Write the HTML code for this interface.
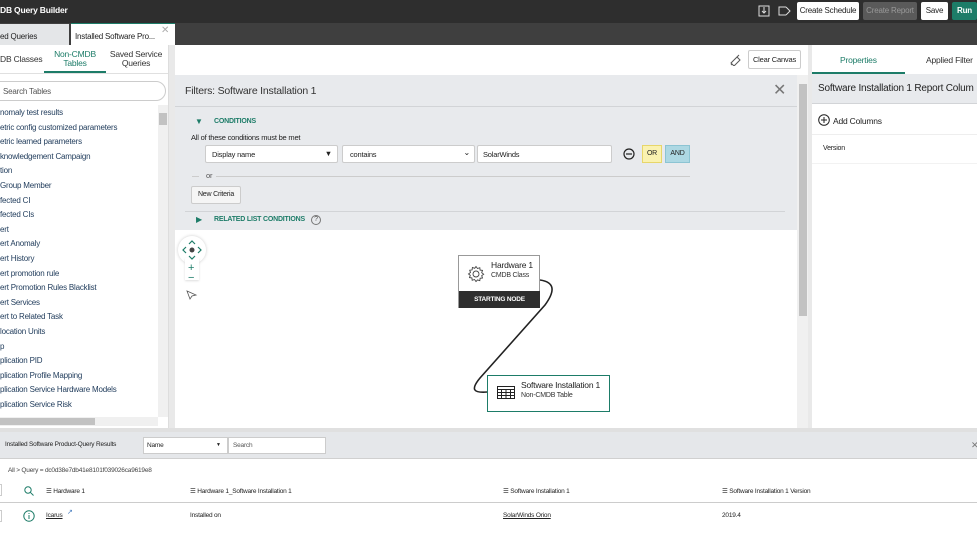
<!DOCTYPE html>
<html><head><meta charset="utf-8">
<style>
*{box-sizing:border-box;margin:0;padding:0}
body{width:977px;height:547px;overflow:hidden;font-family:"Liberation Sans",sans-serif;font-size:8px;color:#222;background:#fff;position:relative;letter-spacing:-0.2px}
.a{position:absolute}
.btn{position:absolute;top:2px;height:18px;font-size:8px;line-height:18px;text-align:center;border-radius:2px}
.li{position:absolute;left:0;font-size:8px;color:#1e3a5a;white-space:nowrap}
</style></head><body>
<div class="a" style="left:0;top:0;width:977px;height:23px;background:#2e2e2e"></div>
<div class="a" style="left:0;top:5px;color:#fff;font-weight:bold;font-size:8.5px">DB Query Builder</div>
<svg class="a" style="left:758px;top:5px" width="12" height="12" viewBox="0 0 12 12" fill="none" stroke="#ddd" stroke-width="1"><rect x="1" y="1" width="10" height="10"/><path d="M6 2v6M4 6l2 2 2-2"/></svg>
<svg class="a" style="left:778px;top:5px" width="13" height="12" viewBox="0 0 13 12" fill="none" stroke="#ddd" stroke-width="1"><path d="M8 2H1v8h7M8 2l4 4-4 4"/></svg>
<div class="btn" style="left:797px;width:62px;background:#fff;color:#222">Create Schedule</div>
<div class="btn" style="left:863px;width:54px;background:#5a5a5a;color:#999">Create Report</div>
<div class="btn" style="left:921px;width:27px;background:#fff;color:#222">Save</div>
<div class="btn" style="left:952px;width:25px;background:#1d7c68;color:#fff;font-weight:bold">Run</div>
<div class="a" style="left:0;top:23px;width:977px;height:22px;background:#3f3f3f"></div>
<div class="a" style="left:0;top:24px;width:69px;height:21px;background:#e4e6e8;padding:8px 0 0 0;font-size:8px">ed Queries</div>
<div class="a" style="left:71px;top:23px;width:104px;height:22px;background:#fff;border-top:1px solid #1d7c68;padding:8px 0 0 4px;font-size:8px">Installed Software Pro...</div>
<div class="a" style="left:161px;top:25px;color:#aaa;font-size:10px">✕</div>
<div class="a" style="left:0;top:45px;width:170px;height:385px;background:#fff"></div>
<div class="a" style="left:0;top:54px;font-size:8.5px;color:#333">DB Classes</div>
<div class="a" style="left:44px;top:50px;width:62px;text-align:center;font-size:8.5px;color:#1d7c68;line-height:9px">Non-CMDB<br>Tables</div>
<div class="a" style="left:44px;top:71px;width:62px;height:2px;background:#1d7c68"></div>
<div class="a" style="left:104px;top:50px;width:64px;text-align:center;font-size:8.5px;color:#333;line-height:9px">Saved Service<br>Queries</div>
<div class="a" style="left:0;top:73px;width:170px;height:1px;background:#e0e0e0"></div>
<div class="a" style="left:-10px;top:81px;width:176px;height:20px;border:1px solid #ccc;border-radius:10px;padding:5px 0 0 12px;color:#555;font-size:8px">Search Tables</div>
<div class="a" style="left:0;top:108px;width:158px;height:310px;font-size:8px">
<div class="li" style="top:0">nomaly test results</div>
<div class="li" style="top:14.6px">etric config customized parameters</div>
<div class="li" style="top:29.2px">etric learned parameters</div>
<div class="li" style="top:43.8px">knowledgement Campaign</div>
<div class="li" style="top:58.4px">tion</div>
<div class="li" style="top:73px">Group Member</div>
<div class="li" style="top:87.6px">fected CI</div>
<div class="li" style="top:102.2px">fected CIs</div>
<div class="li" style="top:116.8px">ert</div>
<div class="li" style="top:131.4px">ert Anomaly</div>
<div class="li" style="top:146px">ert History</div>
<div class="li" style="top:160.6px">ert promotion rule</div>
<div class="li" style="top:175.2px">ert Promotion Rules Blacklist</div>
<div class="li" style="top:189.8px">ert Services</div>
<div class="li" style="top:204.4px">ert to Related Task</div>
<div class="li" style="top:219px">location Units</div>
<div class="li" style="top:233.6px">p</div>
<div class="li" style="top:248.2px">plication PID</div>
<div class="li" style="top:262.8px">plication Profile Mapping</div>
<div class="li" style="top:277.4px">plication Service Hardware Models</div>
<div class="li" style="top:292px">plication Service Risk</div>
</div>
<div class="a" style="left:158px;top:105px;width:10px;height:312px;background:#f0f0f0"></div>
<div class="a" style="left:159px;top:113px;width:8px;height:12px;background:#c2c2c2"></div>
<div class="a" style="left:0;top:417px;width:158px;height:9px;background:#f0f0f0"></div>
<div class="a" style="left:0;top:418px;width:95px;height:7px;background:#c2c2c2"></div>
<div class="a" style="left:168px;top:45px;width:7px;height:385px;background:#e9e9e9;border-left:1px solid #ddd"></div>
<div class="a" style="left:175px;top:45px;width:635px;height:30px;background:#fff"></div>
<svg class="a" style="left:729px;top:53px" width="13" height="13" viewBox="0 0 13 13" fill="none" stroke="#555" stroke-width="1"><path d="M2 10l6-6 3 3-6 6zM8 4l2-2M3 11l-1 1"/></svg>
<div class="a" style="left:748px;top:50px;width:53px;height:19px;border:1px solid #ccc;border-radius:2px;text-align:center;line-height:17px;font-size:7.5px">Clear Canvas</div>
<div class="a" style="left:175px;top:75px;width:622px;height:155px;background:#e8eaed"></div>
<div class="a" style="left:175px;top:106px;width:622px;height:1px;background:#d2d4d7"></div>
<div class="a" style="left:185px;top:85px;font-size:10.5px;color:#333">Filters: Software Installation 1</div>
<div class="a" style="left:773px;top:80px;font-size:16px;color:#777">✕</div>
<div class="a" style="left:195px;top:117px;color:#1d7c68;font-size:8px">▼</div>
<div class="a" style="left:214px;top:118px;color:#1d7c68;font-size:7px;font-weight:bold">CONDITIONS</div>
<div class="a" style="left:191px;top:133px;font-size:7.5px">All of these conditions must be met</div>
<div class="a" style="left:205px;top:145px;width:133px;height:18px;background:#fff;border:1px solid #ccc;border-radius:2px;padding:4px 0 0 6px;font-size:7.5px">Display name<span style="position:absolute;right:5px;top:3px">▼</span></div>
<div class="a" style="left:342px;top:145px;width:133px;height:18px;background:#fff;border:1px solid #ccc;border-radius:2px;padding:4px 0 0 7px;font-size:7.5px">contains<span style="position:absolute;right:4px;top:2px;font-size:8px">⌄</span></div>
<div class="a" style="left:477px;top:145px;width:135px;height:18px;background:#fff;border:1px solid #ccc;border-radius:2px;padding:4px 0 0 5px;font-size:7.5px">SolarWinds</div>
<svg class="a" style="left:623px;top:148px" width="12" height="12" viewBox="0 0 12 12" fill="none" stroke="#222" stroke-width="1.2"><circle cx="6" cy="6" r="5"/><path d="M3 6h6"/></svg>
<div class="a" style="left:642px;top:145px;width:20px;height:18px;background:#faf2b0;border:1px solid #e7d66a;font-size:7px;text-align:center;line-height:16px">OR</div>
<div class="a" style="left:665px;top:145px;width:25px;height:18px;background:#add8e3;border:1px solid #8cc4d3;font-size:7px;text-align:center;line-height:16px">AND</div>
<div class="a" style="left:192px;top:176px;width:7px;height:1px;background:#ccc"></div>
<div class="a" style="left:206px;top:171px;font-size:7.5px;color:#555">or</div>
<div class="a" style="left:216px;top:176px;width:474px;height:1px;background:#ccc"></div>
<div class="a" style="left:191px;top:186px;width:50px;height:18px;background:#f5f5f5;border:1px solid #ccc;border-radius:2px;text-align:center;line-height:16px;font-size:7px">New Criteria</div>
<div class="a" style="left:185px;top:211px;width:600px;height:1px;background:#d2d4d7"></div>
<div class="a" style="left:196px;top:215px;color:#1d7c68;font-size:8px">▶</div>
<div class="a" style="left:214px;top:216px;color:#1d7c68;font-size:7px;font-weight:bold">RELATED LIST CONDITIONS</div>
<div class="a" style="left:311px;top:215px;width:10px;height:10px;border:1px solid #777;border-radius:50%;font-size:7px;text-align:center;line-height:8px;color:#555">?</div>
<div class="a" style="left:175px;top:230px;width:622px;height:198px;background:#fff"></div>
<div class="a" style="left:797px;top:75px;width:11px;height:353px;background:#f0f0f0"></div>
<div class="a" style="left:799px;top:84px;width:8px;height:232px;background:#c2c2c2"></div>
<div class="a" style="left:178px;top:236px;width:28px;height:28px;border-radius:50%;background:#fff;box-shadow:0 0 3px #ccc"></div>
<div class="a" style="left:185px;top:258px;width:14px;height:22px;background:#fff;box-shadow:0 1px 2px #ddd"></div>
<svg class="a" style="left:182px;top:240px" width="20" height="20" viewBox="0 0 20 20" fill="none" stroke="#1d7c68" stroke-width="1.2"><path d="M7 4l3-3 3 3M7 16l3 3 3-3M4 7l-3 3 3 3M16 7l3 3-3 3"/><circle cx="10" cy="10" r="2.5" fill="#444" stroke="none"/></svg>
<div class="a" style="left:188px;top:263px;color:#1d7c68;font-size:11px;line-height:10px">+<br>−</div>
<svg class="a" style="left:186px;top:290px" width="12" height="10" viewBox="0 0 12 10" fill="none" stroke="#555" stroke-width="0.8"><path d="M1 1l9 4-4 1-2 3z"/></svg>
<svg class="a" style="left:170px;top:230px" width="460" height="200" fill="none"><path d="M370 50C384 52 386 60 375 75L310 148C300 160 304 163 317 162" stroke="#222" stroke-width="1.6"/></svg>
<div class="a" style="left:458px;top:255px;width:82px;height:53px;background:#fff;border:1px solid #999"></div>
<svg class="a" style="left:467px;top:265px" width="18" height="18" viewBox="0 0 18 18" fill="none" stroke="#444" stroke-width="0.9"><circle cx="9" cy="9" r="3"/><path d="M9 1.5l1.5 2 2.3-.8.3 2.4 2.4.3-.8 2.3 2 1.5-2 1.5.8 2.3-2.4.3-.3 2.4-2.3-.8L9 16.5l-1.5-2-2.3.8-.3-2.4-2.4-.3.8-2.3L1.5 9l2-1.5-.8-2.3 2.4-.3.3-2.4 2.3.8z"/></svg>
<div class="a" style="left:491px;top:260px;font-size:8.5px">Hardware 1</div>
<div class="a" style="left:491px;top:272px;font-size:7px;color:#333">CMDB Class</div>
<div class="a" style="left:459px;top:291px;width:81px;height:17px;background:#2e2e2e;color:#fff;font-size:6.5px;font-weight:bold;text-align:center;line-height:17px">STARTING NODE</div>
<div class="a" style="left:487px;top:375px;width:123px;height:37px;background:#fff;border:1px solid #1d7c68"></div>
<svg class="a" style="left:497px;top:386px" width="18" height="13" viewBox="0 0 18 13" fill="none" stroke="#222" stroke-width="1"><rect x="0.5" y="0.5" width="17" height="12"/><path d="M0.5 3.5h17M0.5 6.5h17M0.5 9.5h17M4.5 3.5v9M9 3.5v9M13.5 3.5v9"/></svg>
<div class="a" style="left:521px;top:380px;font-size:8.5px">Software Installation 1</div>
<div class="a" style="left:521px;top:392px;font-size:7px;color:#333">Non-CMDB Table</div>
<div class="a" style="left:808px;top:45px;width:4px;height:385px;background:#e9e9e9"></div>
<div class="a" style="left:812px;top:45px;width:165px;height:385px;background:#fff"></div>
<div class="a" style="left:840px;top:55px;font-size:8.5px;color:#1d7c68">Properties</div>
<div class="a" style="left:926px;top:55px;font-size:8.5px;color:#333">Applied Filter</div>
<div class="a" style="left:812px;top:72px;width:93px;height:2px;background:#1d7c68"></div>
<div class="a" style="left:812px;top:74px;width:165px;height:30px;background:#e8eaed;border-bottom:1px solid #d2d4d7;padding:9px 0 0 6px;font-size:10px;white-space:nowrap;overflow:hidden">Software Installation 1 Report Colum</div>
<svg class="a" style="left:818px;top:114px" width="12" height="12" viewBox="0 0 12 12" fill="none" stroke="#222" stroke-width="1"><circle cx="6" cy="6" r="5.3"/><path d="M6 3v6M3 6h6"/></svg>
<div class="a" style="left:833px;top:116px;font-size:8.5px">Add Columns</div>
<div class="a" style="left:812px;top:134px;width:165px;height:1px;background:#eee"></div>
<div class="a" style="left:823px;top:145px;font-size:7px">Version</div>
<div class="a" style="left:812px;top:163px;width:165px;height:1px;background:#f2f2f2"></div>
<div class="a" style="left:0;top:428px;width:977px;height:4px;background:#e0e0e0"></div>
<div class="a" style="left:0;top:432px;width:977px;height:27px;background:#e5e7ea;border-bottom:1px solid #d0d0d0"></div>
<div class="a" style="left:5px;top:441px;font-size:6.5px">Installed Software Product-Query Results</div>
<div class="a" style="left:143px;top:437px;width:85px;height:17px;background:#fff;border:1px solid #ccc;padding:4px 0 0 3px;font-size:6.5px">Name<span style="position:absolute;left:72px;top:4px;font-size:5px">▼</span></div>
<div class="a" style="left:228px;top:437px;width:98px;height:17px;background:#fff;border:1px solid #ccc;padding:4px 0 0 4px;font-size:6.5px;color:#555">Search</div>
<div class="a" style="left:971px;top:440px;font-size:9px;color:#777">✕</div>
<div class="a" style="left:8px;top:467px;font-size:6.5px;color:#444">All &gt; Query = dc0d38e7db41e8101f039026ca9619e8</div>
<svg class="a" style="left:24px;top:486px" width="10" height="10" viewBox="0 0 10 10" fill="none" stroke="#1d7c68" stroke-width="1"><circle cx="4" cy="4" r="3.2"/><path d="M6.3 6.3L9.5 9.5"/></svg>
<div class="a" style="left:46px;top:487px;font-size:6.5px">☰ Hardware 1</div>
<div class="a" style="left:190px;top:487px;font-size:6.5px">☰ Hardware 1_Software Installation 1</div>
<div class="a" style="left:503px;top:487px;font-size:6.5px">☰ Software Installation 1</div>
<div class="a" style="left:722px;top:487px;font-size:6.5px">☰ Software Installation 1 Version</div>
<div class="a" style="left:0;top:502px;width:977px;height:1px;background:#ccc"></div>
<div class="a" style="left:-5px;top:484px;width:7px;height:12px;border:1px solid #ccc"></div>
<div class="a" style="left:-5px;top:510px;width:7px;height:12px;border:1px solid #ccc"></div>
<svg class="a" style="left:23px;top:510px" width="12" height="12" viewBox="0 0 12 12" fill="none" stroke="#1d7c68" stroke-width="1"><circle cx="6" cy="6" r="5.2"/><path d="M6 5v4M6 3v1"/></svg>
<div class="a" style="left:46px;top:512px;font-size:6.5px;text-decoration:underline">Icarus</div>
<div class="a" style="left:67px;top:508px;font-size:7px;color:#4a7fc0">↗</div>
<div class="a" style="left:190px;top:512px;font-size:6.5px">Installed on</div>
<div class="a" style="left:503px;top:512px;font-size:6.5px;text-decoration:underline">SolarWinds Orion</div>
<div class="a" style="left:722px;top:512px;font-size:6.5px">2019.4</div>
</body></html>
